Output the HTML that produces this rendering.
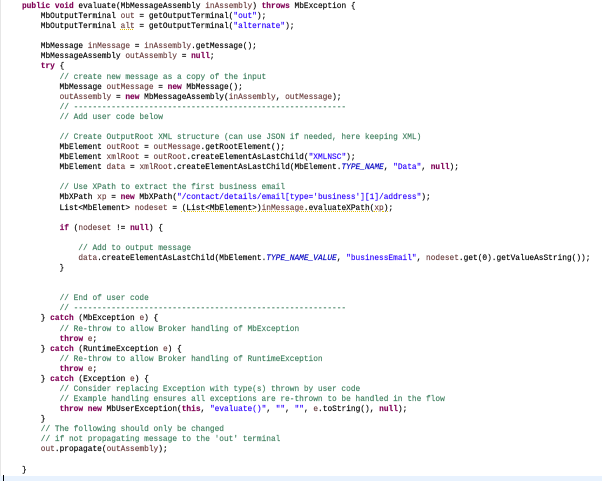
<!DOCTYPE html>
<html><head><meta charset="utf-8"><style>
html,body{margin:0;padding:0;background:#fff;width:602px;height:481px;overflow:hidden;position:relative}
pre{margin:0;position:absolute;left:3.2px;top:2px;font-family:"Liberation Mono",monospace;font-size:7.83px;line-height:10.08px;color:#000;white-space:pre;-webkit-text-stroke:0.15px}
.k{color:#7f0055;font-weight:bold}
.c{color:#3f7f5f}
.s{color:#2a00ff}
.v{color:#6a3e3e}
.f{color:#0000c0;font-style:italic}
.w{text-decoration:underline dotted #e8c000}
.edge{position:absolute;left:0;top:0;width:1px;height:476px;background:#e6e6e6}
.cur{position:absolute;left:0;top:476px;width:602px;height:5px;background:#e8f2fe}
.caret{position:absolute;left:3px;top:475px;width:1px;height:6px;background:#000}
</style></head><body>
<div class="edge"></div>
<div class="cur"></div><div class="caret"></div>
<pre>    <span class="k">public</span> <span class="k">void</span> evaluate(MbMessageAssembly <span class="v">inAssembly</span>) <span class="k">throws</span> MbException {
        MbOutputTerminal <span class="v">out</span> = getOutputTerminal(<span class="s">"out"</span>);
        MbOutputTerminal <span class="v w">alt</span> = getOutputTerminal(<span class="s">"alternate"</span>);

        MbMessage <span class="v">inMessage</span> = <span class="v">inAssembly</span>.getMessage();
        MbMessageAssembly <span class="v">outAssembly</span> = <span class="k">null</span>;
        <span class="k">try</span> {
            <span class="c">// create new message as a copy of the input</span>
            MbMessage <span class="v">outMessage</span> = <span class="k">new</span> MbMessage();
            <span class="v">outAssembly</span> = <span class="k">new</span> MbMessageAssembly(<span class="v">inAssembly</span>, <span class="v">outMessage</span>);
            <span class="c">// ----------------------------------------------------------</span>
            <span class="c">// Add user code below</span>

            <span class="c">// Create OutputRoot XML structure (can use JSON if needed, here keeping XML)</span>
            MbElement <span class="v">outRoot</span> = <span class="v">outMessage</span>.getRootElement();
            MbElement <span class="v">xmlRoot</span> = <span class="v">outRoot</span>.createElementAsLastChild(<span class="s">"XMLNSC"</span>);
            MbElement <span class="v">data</span> = <span class="v">xmlRoot</span>.createElementAsLastChild(MbElement.<span class="f">TYPE_NAME</span>, <span class="s">"Data"</span>, <span class="k">null</span>);

            <span class="c">// Use XPath to extract the first business email</span>
            MbXPath <span class="v">xp</span> = <span class="k">new</span> MbXPath(<span class="s">"/contact/details/email[type='business'][1]/address"</span>);
            List&lt;MbElement&gt; <span class="v">nodeset</span> = <span class="w">(List&lt;MbElement&gt;)<span class="v">inMessage</span>.evaluateXPath(<span class="v">xp</span>)</span>;

            <span class="k">if</span> (<span class="v">nodeset</span> != <span class="k">null</span>) {

                <span class="c">// Add to output message</span>
                <span class="v">data</span>.createElementAsLastChild(MbElement.<span class="f">TYPE_NAME_VALUE</span>, <span class="s">"businessEmail"</span>, <span class="v">nodeset</span>.get(0).getValueAsString());
            }


            <span class="c">// End of user code</span>
            <span class="c">// ----------------------------------------------------------</span>
        } <span class="k">catch</span> (MbException <span class="v">e</span>) {
            <span class="c">// Re-throw to allow Broker handling of MbException</span>
            <span class="k">throw</span> <span class="v">e</span>;
        } <span class="k">catch</span> (RuntimeException <span class="v">e</span>) {
            <span class="c">// Re-throw to allow Broker handling of RuntimeException</span>
            <span class="k">throw</span> <span class="v">e</span>;
        } <span class="k">catch</span> (Exception <span class="v">e</span>) {
            <span class="c">// Consider replacing Exception with type(s) thrown by user code</span>
            <span class="c">// Example handling ensures all exceptions are re-thrown to be handled in the flow</span>
            <span class="k">throw</span> <span class="k">new</span> MbUserException(<span class="k">this</span>, <span class="s">"evaluate()"</span>, <span class="s">""</span>, <span class="s">""</span>, <span class="v">e</span>.toString(), <span class="k">null</span>);
        }
        <span class="c">// The following should only be changed</span>
        <span class="c">// if not propagating message to the 'out' terminal</span>
        <span class="v">out</span>.propagate(<span class="v">outAssembly</span>);

    }
</pre>
</body></html>
